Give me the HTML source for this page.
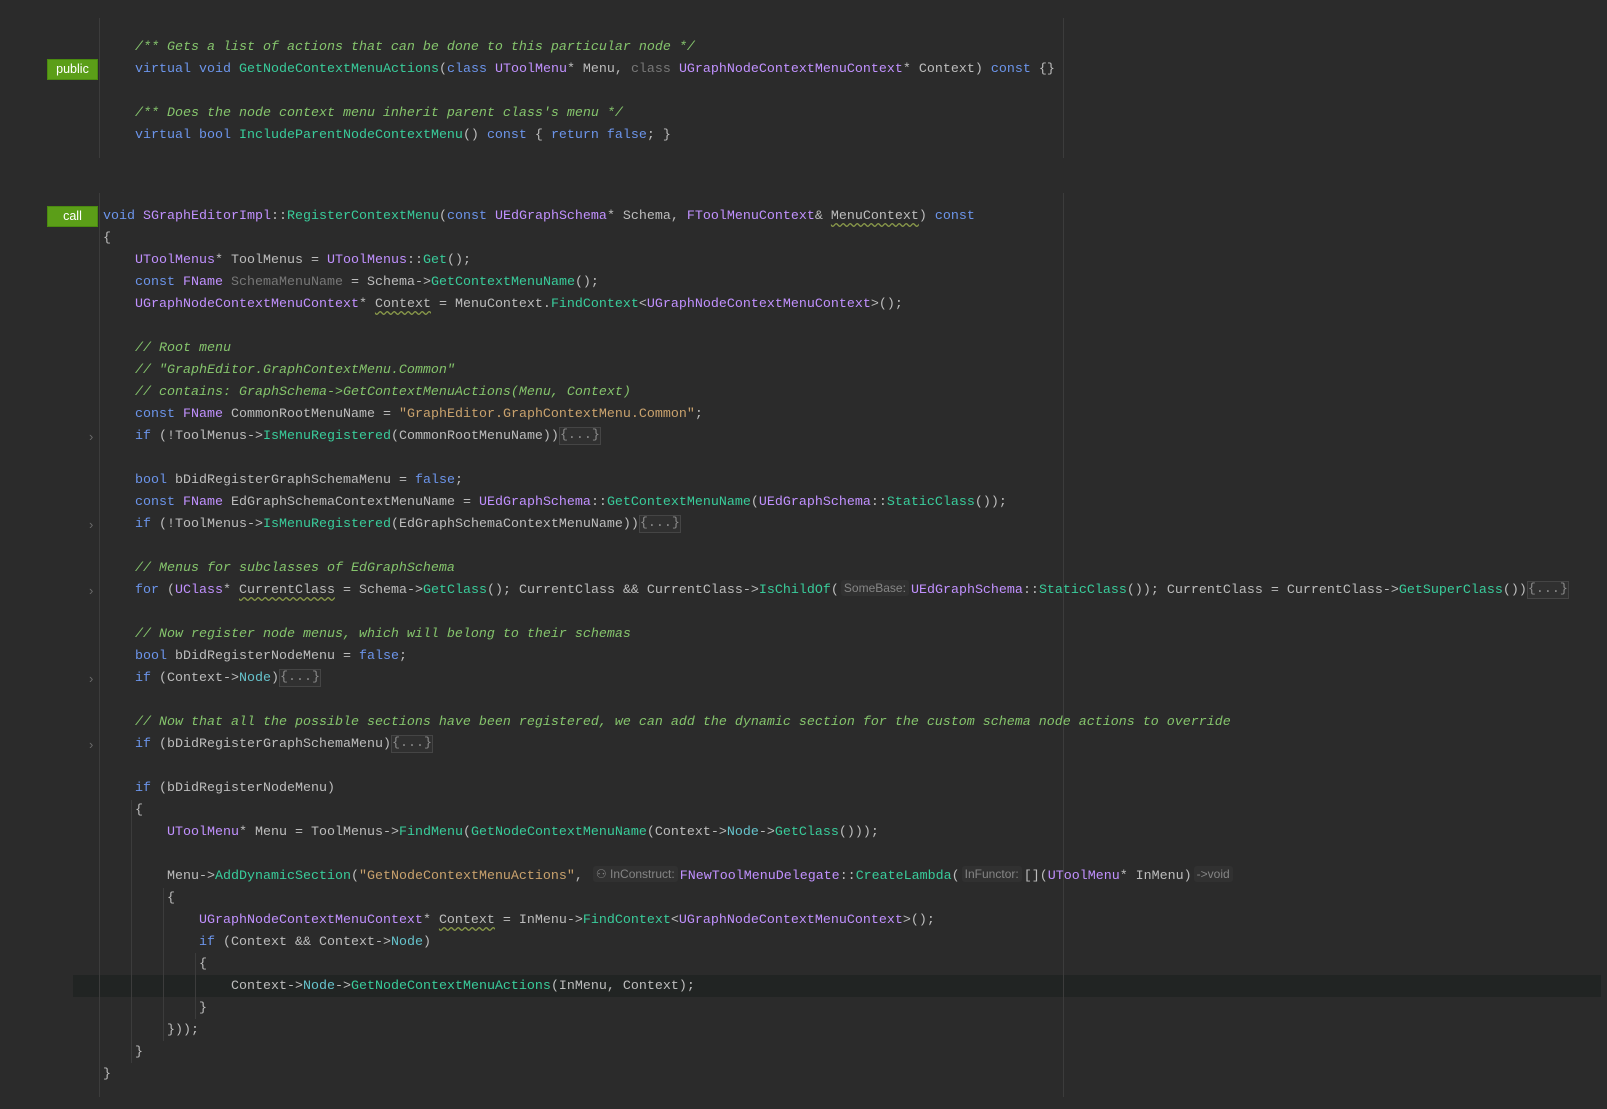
<!DOCTYPE html>
<html><head><meta charset="utf-8"><style>
html,body{margin:0;padding:0;background:#2b2b2b;width:1607px;height:1109px;overflow:hidden;position:relative}
.l{position:absolute;left:103px;height:22px;line-height:22px;font-family:"Liberation Mono",monospace;font-size:13.33px;color:#bdbdbd;white-space:pre;margin-top:2px}
.k{color:#6c95eb}.f{color:#39cc9b}.c{color:#c191ff}.m{color:#85c46c;font-style:italic}.s{color:#c9a26d}.g{color:#787878}.t{color:#66c3cc}
.w{text-decoration:underline wavy #8a9a4a;text-underline-offset:3px}
.h{display:inline-block;font-family:"Liberation Sans",sans-serif;font-size:12px;color:#858585;background:#313131;border-radius:3px;padding:0 3px;line-height:16px;margin:0 2px;vertical-align:1px}
.fd{color:#8a8a8a;border:1px solid #454545;background:#303030;line-height:16px;display:inline-block;vertical-align:1px}
.vl{position:absolute;width:1px;background:#3c3c3c}
.badge{position:absolute;left:47px;width:49px;height:19px;background:#5b9e18;border:1px solid #4a8a10;color:#fff;font-family:"Liberation Sans",sans-serif;font-size:12.5px;text-align:center;line-height:19px}
.arr{position:absolute;left:89px;color:#6a6a6a;font-family:"Liberation Sans",sans-serif;font-size:13px}
</style></head><body>
<div style="position:absolute;left:73px;top:975px;width:1528px;height:22px;background:#212423"></div>
<div class="vl" style="left:99px;top:18px;height:140px"></div>
<div class="vl" style="left:1063px;top:18px;height:140px"></div>
<div class="vl" style="left:99px;top:193px;height:904px"></div>
<div class="vl" style="left:1063px;top:193px;height:904px"></div>
<div class="vl" style="left:131px;top:800px;height:263px"></div>
<div class="vl" style="left:163px;top:888px;height:153px"></div>
<div class="vl" style="left:195px;top:953px;height:66px"></div>
<div class="badge" style="top:59px">public</div>
<div class="badge" style="top:206px">call</div>
<div class="arr" style="top:429px">›</div>
<div class="arr" style="top:517px">›</div>
<div class="arr" style="top:583px">›</div>
<div class="arr" style="top:671px">›</div>
<div class="arr" style="top:737px">›</div>

<div class="l" style="top:35px"><span class="m">    /** Gets a list of actions that can be done to this particular node */</span></div>
<div class="l" style="top:57px">    <span class="k">virtual void </span><span class="f">GetNodeContextMenuActions</span>(<span class="k">class </span><span class="c">UToolMenu</span>* Menu, <span class="g">class </span><span class="c">UGraphNodeContextMenuContext</span>* Context) <span class="k">const</span> {}</div>
<div class="l" style="top:101px"><span class="m">    /** Does the node context menu inherit parent class's menu */</span></div>
<div class="l" style="top:123px">    <span class="k">virtual bool </span><span class="f">IncludeParentNodeContextMenu</span>() <span class="k">const</span> { <span class="k">return false</span>; }</div>

<div class="l" style="top:204px"><span class="k">void </span><span class="c">SGraphEditorImpl</span>::<span class="f">RegisterContextMenu</span>(<span class="k">const </span><span class="c">UEdGraphSchema</span>* Schema, <span class="c">FToolMenuContext</span>&amp; <span class="w">MenuContext</span>) <span class="k">const</span></div>
<div class="l" style="top:226px">{</div>
<div class="l" style="top:248px">    <span class="c">UToolMenus</span>* ToolMenus = <span class="c">UToolMenus</span>::<span class="f">Get</span>();</div>
<div class="l" style="top:270px">    <span class="k">const </span><span class="c">FName</span> <span class="g">SchemaMenuName</span> = Schema-&gt;<span class="f">GetContextMenuName</span>();</div>
<div class="l" style="top:292px">    <span class="c">UGraphNodeContextMenuContext</span>* <span class="w">Context</span> = MenuContext.<span class="f">FindContext</span>&lt;<span class="c">UGraphNodeContextMenuContext</span>&gt;();</div>
<div class="l" style="top:336px"><span class="m">    // Root menu</span></div>
<div class="l" style="top:358px"><span class="m">    // "GraphEditor.GraphContextMenu.Common"</span></div>
<div class="l" style="top:380px"><span class="m">    // contains: GraphSchema-&gt;GetContextMenuActions(Menu, Context)</span></div>
<div class="l" style="top:402px">    <span class="k">const </span><span class="c">FName</span> CommonRootMenuName = <span class="s">"GraphEditor.GraphContextMenu.Common"</span>;</div>
<div class="l" style="top:424px">    <span class="k">if</span> (!ToolMenus-&gt;<span class="f">IsMenuRegistered</span>(CommonRootMenuName))<span class="fd">{...}</span></div>
<div class="l" style="top:468px">    <span class="k">bool</span> bDidRegisterGraphSchemaMenu = <span class="k">false</span>;</div>
<div class="l" style="top:490px">    <span class="k">const </span><span class="c">FName</span> EdGraphSchemaContextMenuName = <span class="c">UEdGraphSchema</span>::<span class="f">GetContextMenuName</span>(<span class="c">UEdGraphSchema</span>::<span class="f">StaticClass</span>());</div>
<div class="l" style="top:512px">    <span class="k">if</span> (!ToolMenus-&gt;<span class="f">IsMenuRegistered</span>(EdGraphSchemaContextMenuName))<span class="fd">{...}</span></div>
<div class="l" style="top:556px"><span class="m">    // Menus for subclasses of EdGraphSchema</span></div>
<div class="l" style="top:578px">    <span class="k">for</span> (<span class="c">UClass</span>* <span class="w">CurrentClass</span> = Schema-&gt;<span class="f">GetClass</span>(); CurrentClass &amp;&amp; CurrentClass-&gt;<span class="f">IsChildOf</span>(<span class="h">SomeBase:</span><span class="c">UEdGraphSchema</span>::<span class="f">StaticClass</span>()); CurrentClass = CurrentClass-&gt;<span class="f">GetSuperClass</span>())<span class="fd">{...}</span></div>
<div class="l" style="top:622px"><span class="m">    // Now register node menus, which will belong to their schemas</span></div>
<div class="l" style="top:644px">    <span class="k">bool</span> bDidRegisterNodeMenu = <span class="k">false</span>;</div>
<div class="l" style="top:666px">    <span class="k">if</span> (Context-&gt;<span class="t">Node</span>)<span class="fd">{...}</span></div>
<div class="l" style="top:710px"><span class="m">    // Now that all the possible sections have been registered, we can add the dynamic section for the custom schema node actions to override</span></div>
<div class="l" style="top:732px">    <span class="k">if</span> (bDidRegisterGraphSchemaMenu)<span class="fd">{...}</span></div>
<div class="l" style="top:776px">    <span class="k">if</span> (bDidRegisterNodeMenu)</div>
<div class="l" style="top:798px">    {</div>
<div class="l" style="top:820px">        <span class="c">UToolMenu</span>* Menu = ToolMenus-&gt;<span class="f">FindMenu</span>(<span class="f">GetNodeContextMenuName</span>(Context-&gt;<span class="t">Node</span>-&gt;<span class="f">GetClass</span>()));</div>
<div class="l" style="top:864px">        Menu-&gt;<span class="f">AddDynamicSection</span>(<span class="s">"GetNodeContextMenuActions"</span>, <span class="h">⚇ InConstruct:</span><span class="c">FNewToolMenuDelegate</span>::<span class="f">CreateLambda</span>(<span class="h">InFunctor:</span>[](<span class="c">UToolMenu</span>* InMenu)<span class="h">-&gt;void</span></div>
<div class="l" style="top:886px">        {</div>
<div class="l" style="top:908px">            <span class="c">UGraphNodeContextMenuContext</span>* <span class="w">Context</span> = InMenu-&gt;<span class="f">FindContext</span>&lt;<span class="c">UGraphNodeContextMenuContext</span>&gt;();</div>
<div class="l" style="top:930px">            <span class="k">if</span> (Context &amp;&amp; Context-&gt;<span class="t">Node</span>)</div>
<div class="l" style="top:952px">            {</div>
<div class="l" style="top:974px">                Context-&gt;<span class="t">Node</span>-&gt;<span class="f">GetNodeContextMenuActions</span>(InMenu, Context);</div>
<div class="l" style="top:996px">            }</div>
<div class="l" style="top:1018px">        }));</div>
<div class="l" style="top:1040px">    }</div>
<div class="l" style="top:1062px">}</div>
</body></html>
